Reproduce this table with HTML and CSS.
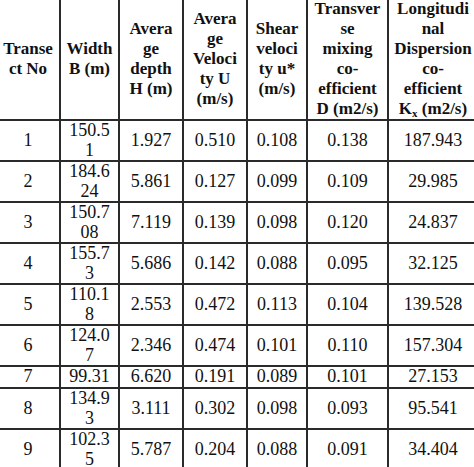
FILE: index.html
```html
<!DOCTYPE html>
<html>
<head>
<meta charset="utf-8">
<link rel="stylesheet" href="styles.css">
</head>
<body>
<table class="data">
  <colgroup>
    <col class="c1"><col class="c2"><col class="c3"><col class="c4"><col class="c5"><col class="c6"><col class="c7">
  </colgroup>
  <thead>
    <tr class="head">
      <th>Transe<br>ct No</th>
      <th>Width<br>B (m)</th>
      <th>Avera<br>ge<br>depth<br>H (m)</th>
      <th>Avera<br>ge<br>Veloci<br>ty U<br>(m/s)</th>
      <th>Shear<br>veloci<br>ty u*<br>(m/s)</th>
      <th>Transver<br>se<br>mixing<br>co-<br>efficient<br>D (m2/s)</th>
      <th>Longitudi<br>nal<br>Dispersion<br>co-<br>efficient<br>K<sub>x</sub> (m2/s)</th>
    </tr>
  </thead>
  <tbody>
    <tr class="row"><td>1</td><td>150.5<br>1</td><td>1.927</td><td>0.510</td><td>0.108</td><td>0.138</td><td>187.943</td></tr>
    <tr class="row"><td>2</td><td>184.6<br>24</td><td>5.861</td><td>0.127</td><td>0.099</td><td>0.109</td><td>29.985</td></tr>
    <tr class="row"><td>3</td><td>150.7<br>08</td><td>7.119</td><td>0.139</td><td>0.098</td><td>0.120</td><td>24.837</td></tr>
    <tr class="row"><td>4</td><td>155.7<br>3</td><td>5.686</td><td>0.142</td><td>0.088</td><td>0.095</td><td>32.125</td></tr>
    <tr class="row"><td>5</td><td>110.1<br>8</td><td>2.553</td><td>0.472</td><td>0.113</td><td>0.104</td><td>139.528</td></tr>
    <tr class="row"><td>6</td><td>124.0<br>7</td><td>2.346</td><td>0.474</td><td>0.101</td><td>0.110</td><td>157.304</td></tr>
    <tr class="row short"><td>7</td><td>99.31</td><td>6.620</td><td>0.191</td><td>0.089</td><td>0.101</td><td>27.153</td></tr>
    <tr class="row"><td>8</td><td>134.9<br>3</td><td>3.111</td><td>0.302</td><td>0.098</td><td>0.093</td><td>95.541</td></tr>
    <tr class="row"><td>9</td><td>102.3<br>5</td><td>5.787</td><td>0.204</td><td>0.088</td><td>0.091</td><td>34.404</td></tr>
  </tbody>
</table>
</body>
</html>
```
FILE: styles.css
```css
html, body {
  margin: 0;
  padding: 0;
  background: #ffffff;
  overflow: hidden;
}

body {
  width: 474px;
  height: 467px;
  font-family: "Liberation Serif", "Times New Roman", serif;
  color: #111;
}

.data {
  border-collapse: collapse;
  table-layout: fixed;
  width: 482px;
  margin-left: -5px;
  margin-top: -3px;
}

.c1 { width: 64px; }
.c2 { width: 59px; }
.c3 { width: 64px; }
.c4 { width: 64px; }
.c5 { width: 60px; }
.c6 { width: 81px; }
.c7 { width: 90px; }

.data th,
.data td {
  border: 2px solid #2a2a2a;
  padding: 0;
  text-align: center;
  vertical-align: middle;
  white-space: nowrap;
  overflow: hidden;
}

.data th {
  font-weight: bold;
  font-size: 17px;
  line-height: 20px;
}

.head {
  height: 120px;
}

.data td {
  font-size: 18px;
  line-height: 19.5px;
}

.row {
  height: 41px;
}

.row.short {
  height: 22px;
}

.data sub {
  font-size: 11px;
  line-height: 0;
  vertical-align: -3px;
}
```
